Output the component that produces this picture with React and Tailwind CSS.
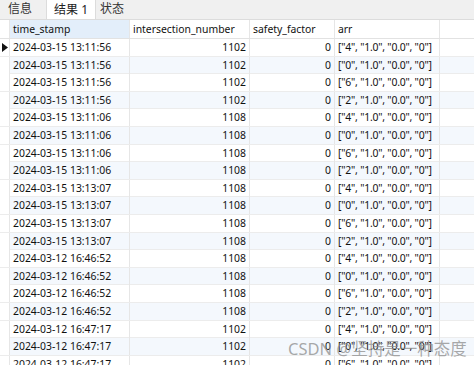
import React from 'react';

const rows = [
  ['2024-03-15 13:11:56', '1102', '0', '["4", "1.0", "0.0", "0"]'],
  ['2024-03-15 13:11:56', '1102', '0', '["0", "1.0", "0.0", "0"]'],
  ['2024-03-15 13:11:56', '1102', '0', '["6", "1.0", "0.0", "0"]'],
  ['2024-03-15 13:11:56', '1102', '0', '["2", "1.0", "0.0", "0"]'],
  ['2024-03-15 13:11:06', '1108', '0', '["4", "1.0", "0.0", "0"]'],
  ['2024-03-15 13:11:06', '1108', '0', '["0", "1.0", "0.0", "0"]'],
  ['2024-03-15 13:11:06', '1108', '0', '["6", "1.0", "0.0", "0"]'],
  ['2024-03-15 13:11:06', '1108', '0', '["2", "1.0", "0.0", "0"]'],
  ['2024-03-15 13:13:07', '1108', '0', '["4", "1.0", "0.0", "0"]'],
  ['2024-03-15 13:13:07', '1108', '0', '["0", "1.0", "0.0", "0"]'],
  ['2024-03-15 13:13:07', '1108', '0', '["6", "1.0", "0.0", "0"]'],
  ['2024-03-15 13:13:07', '1108', '0', '["2", "1.0", "0.0", "0"]'],
  ['2024-03-12 16:46:52', '1108', '0', '["4", "1.0", "0.0", "0"]'],
  ['2024-03-12 16:46:52', '1108', '0', '["0", "1.0", "0.0", "0"]'],
  ['2024-03-12 16:46:52', '1108', '0', '["6", "1.0", "0.0", "0"]'],
  ['2024-03-12 16:46:52', '1108', '0', '["2", "1.0", "0.0", "0"]'],
  ['2024-03-12 16:47:17', '1102', '0', '["4", "1.0", "0.0", "0"]'],
  ['2024-03-12 16:47:17', '1102', '0', '["0", "1.0", "0.0", "0"]'],
  ['2024-03-12 16:47:17', '1102', '0', '["6", "1.0", "0.0", "0"]'],
];

const cols = 'grid grid-cols-[10px_120px_120px_85px_105px]';

export default function App() {
  return (
    <div
      className="relative w-[474px] h-[365px] overflow-hidden bg-white text-[10.4px] text-[#111]"
      style={{ fontFamily: '"Noto Sans", "Noto Sans CJK SC", sans-serif' }}
    >
      {/* tabs */}
      <div className="flex h-[20px] items-end bg-[#f0f0f0] border-b border-[#dcdcdc] pl-[2px] text-[12px]">
        <div className="px-[6px] h-[19px] leading-[18px] text-[#333]">信息</div>
        <div className="ml-[8px] px-[7px] h-[20px] leading-[19px] bg-white border-x border-t border-[#dcdcdc] text-[#222]">结果 1</div>
        <div className="px-[4px] h-[19px] leading-[18px] text-[#333]">状态</div>
      </div>

      {/* header */}
      <div className={`${cols} h-[19px] leading-[18px] border-b border-[#e2e2e2]`}>
        <div className="border-r border-[#e6e6e6]" />
        <div className="bg-[#e3eefa] px-[3px] border-r border-[#e6e6e6]">time_stamp</div>
        <div className="px-[3px] border-r border-[#e6e6e6]">intersection_number</div>
        <div className="px-[3px] border-r border-[#e6e6e6]">safety_factor</div>
        <div className="px-[3px] border-r border-[#e6e6e6]">arr</div>
      </div>

      {/* rows */}
      {rows.map((r, i) => (
        <div
          key={i}
          className={`${cols} h-[17.6px] leading-[17px] border-b border-[#ececec] ${i % 2 === 1 ? 'bg-[#f4f8fd]' : 'bg-white'}`}
        >
          <div className="bg-white border-r border-[#e6e6e6] flex items-center justify-center">
            {i === 0 && (
              <svg width="6" height="9" viewBox="0 0 6 9">
                <path d="M0 0 L6 4.5 L0 9 Z" fill="#111" />
              </svg>
            )}
          </div>
          <div className="px-[3px] border-r border-[#e6e6e6] whitespace-nowrap">{r[0]}</div>
          <div className="px-[3px] border-r border-[#e6e6e6] text-right">{r[1]}</div>
          <div className="px-[3px] border-r border-[#e6e6e6] text-right">{r[2]}</div>
          <div className="px-[3px] border-r border-[#e6e6e6] whitespace-nowrap tracking-[-0.2px]">{r[3]}</div>
        </div>
      ))}

      {/* watermark */}
      <div className="absolute left-[288px] top-[339px] text-[16.5px] leading-[20px] text-[#8c8c8c]/75 whitespace-nowrap">
        CSDN @坚持是一种态度
      </div>
    </div>
  );
}
